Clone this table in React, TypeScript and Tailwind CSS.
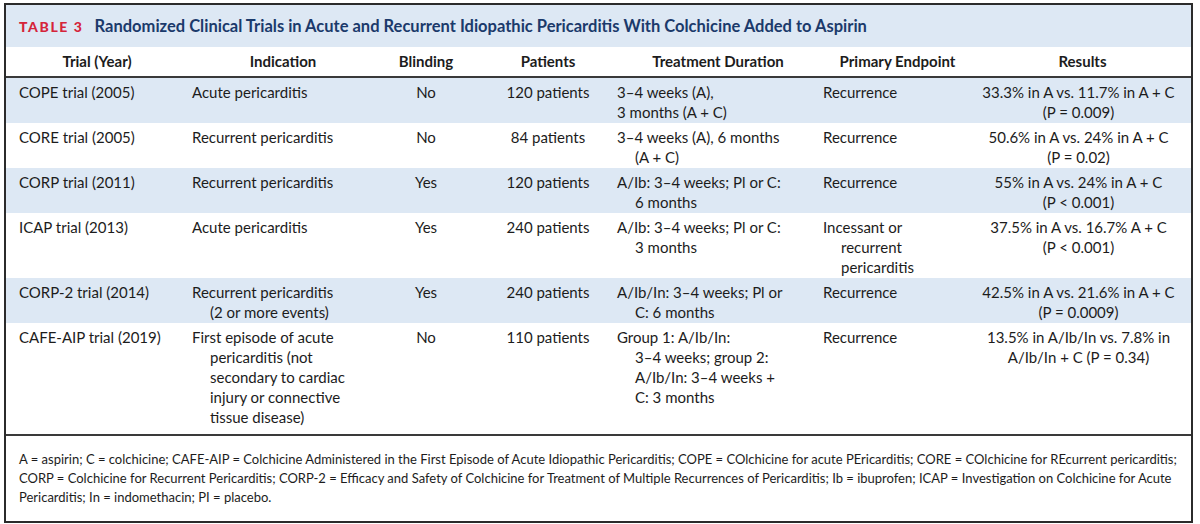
import React from 'react';

type Row = {
  trial: string;
  indication: string[];
  blinding: string;
  patients: string;
  treatment: string[];
  treatmentFlat?: boolean;
  endpoint: string[];
  results: string[];
  shaded: boolean;
};

const rows: Row[] = [
  {
    trial: 'COPE trial (2005)',
    indication: ['Acute pericarditis'],
    blinding: 'No',
    patients: '120 patients',
    treatment: ['3–4 weeks (A),', '3 months (A + C)'],
    treatmentFlat: true,
    endpoint: ['Recurrence'],
    results: ['33.3% in A vs. 11.7% in A + C', '(P = 0.009)'],
    shaded: true,
  },
  {
    trial: 'CORE trial (2005)',
    indication: ['Recurrent pericarditis'],
    blinding: 'No',
    patients: '84 patients',
    treatment: ['3–4 weeks (A), 6 months', '(A + C)'],
    endpoint: ['Recurrence'],
    results: ['50.6% in A vs. 24% in A + C', '(P = 0.02)'],
    shaded: false,
  },
  {
    trial: 'CORP trial (2011)',
    indication: ['Recurrent pericarditis'],
    blinding: 'Yes',
    patients: '120 patients',
    treatment: ['A/Ib: 3–4 weeks; Pl or C:', '6 months'],
    endpoint: ['Recurrence'],
    results: ['55% in A vs. 24% in A + C', '(P < 0.001)'],
    shaded: true,
  },
  {
    trial: 'ICAP trial (2013)',
    indication: ['Acute pericarditis'],
    blinding: 'Yes',
    patients: '240 patients',
    treatment: ['A/Ib: 3–4 weeks; Pl or C:', '3 months'],
    endpoint: ['Incessant or', 'recurrent', 'pericarditis'],
    results: ['37.5% in A vs. 16.7% A + C', '(P < 0.001)'],
    shaded: false,
  },
  {
    trial: 'CORP-2 trial (2014)',
    indication: ['Recurrent pericarditis', '(2 or more events)'],
    blinding: 'Yes',
    patients: '240 patients',
    treatment: ['A/Ib/In: 3–4 weeks; Pl or', 'C: 6 months'],
    endpoint: ['Recurrence'],
    results: ['42.5% in A vs. 21.6% in A + C', '(P = 0.0009)'],
    shaded: true,
  },
  {
    trial: 'CAFE-AIP trial (2019)',
    indication: [
      'First episode of acute',
      'pericarditis (not',
      'secondary to cardiac',
      'injury or connective',
      'tissue disease)',
    ],
    blinding: 'No',
    patients: '110 patients',
    treatment: ['Group 1: A/Ib/In:', '3–4 weeks; group 2:', 'A/Ib/In: 3–4 weeks +', 'C: 3 months'],
    endpoint: ['Recurrence'],
    results: ['13.5% in A/Ib/In vs. 7.8% in', 'A/Ib/In + C (P = 0.34)'],
    shaded: false,
  },
];

const cols = 'grid grid-cols-[182px_190px_102px_136px_204px_155px_215px]';

// first line flush, the rest hang
function Hanging({ lines, flat }: { lines: string[]; flat?: boolean }) {
  return (
    <>
      {lines.map((l, i) => (
        <div key={i} className={i > 0 && !flat ? 'pl-[18px]' : ''}>
          {l}
        </div>
      ))}
    </>
  );
}

export default function App() {
  return (
    <div className="min-h-[524px] bg-white pt-[3px] pl-[4px] font-['Lato',sans-serif] text-[#1c1c1c]">
      <div className="w-[1189px] border-2 border-[#2b2b2b]">
        {/* Title band */}
        <div className="flex h-[42px] items-center gap-[11px] bg-[#dde8f4] pl-[13px]">
          <span className="text-[14px] font-black tracking-[1.6px] text-[#d5243a]">TABLE 3</span>
          <span className="text-[16.5px] font-bold text-[#1b3a6b]">
            Randomized Clinical Trials in Acute and Recurrent Idiopathic Pericarditis With Colchicine Added to Aspirin
          </span>
        </div>

        {/* Header row */}
        <div className={`${cols} h-[31px] items-center border-b-2 border-[#3a3a3a] text-[15px] font-bold`}>
          <div className="text-center">Trial (Year)</div>
          <div className="text-center">Indication</div>
          <div className="pr-[6px] text-center">Blinding</div>
          <div className="text-center">Patients</div>
          <div className="text-center">Treatment Duration</div>
          <div className="text-center">Primary Endpoint</div>
          <div className="text-center">Results</div>
        </div>

        {/* Body */}
        {rows.map((r, i) => (
          <div
            key={r.trial}
            className={`${cols} text-[15px] leading-[20px] pt-[4px] ${
              i === rows.length - 1 ? 'pb-[7px]' : 'pb-[1px]'
            } ${r.shaded ? 'bg-[#dde8f4]' : 'bg-white'}`}
          >
            <div className="pl-[13px]">{r.trial}</div>
            <div className="pl-[4px]">
              <Hanging lines={r.indication} />
            </div>
            <div className="pr-[6px] text-center">{r.blinding}</div>
            <div className="text-center">{r.patients}</div>
            <div className="pl-[1px]">
              <Hanging lines={r.treatment} flat={r.treatmentFlat} />
            </div>
            <div className="pl-[3px]">
              <Hanging lines={r.endpoint} />
            </div>
            <div className="pr-[8px] text-center">
              {r.results.map((l) => (
                <div key={l}>{l}</div>
              ))}
            </div>
          </div>
        ))}

        {/* Footnote */}
        <div className="border-t-2 border-[#3a3a3a] px-[13px] pt-[14px] pb-[14px] text-[13px] leading-[19px]">
          <div>
            A = aspirin; C = colchicine; CAFE-AIP = Colchicine Administered in the First Episode of Acute Idiopathic
            Pericarditis; COPE = COlchicine for acute PEricarditis; CORE = COlchicine for REcurrent pericarditis;
          </div>
          <div>
            CORP = Colchicine for Recurrent Pericarditis; CORP-2 = Efficacy and Safety of Colchicine for Treatment of
            Multiple Recurrences of Pericarditis; Ib = ibuprofen; ICAP = Investigation on Colchicine for Acute
          </div>
          <div>Pericarditis; In = indomethacin; PI = placebo.</div>
        </div>
      </div>
    </div>
  );
}
